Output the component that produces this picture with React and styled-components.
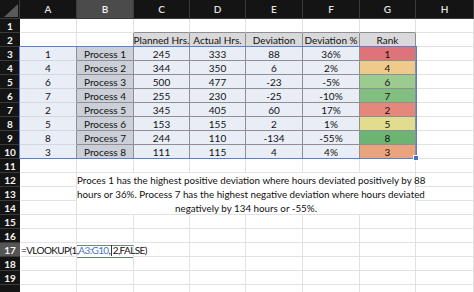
import React from 'react';
import styled, { createGlobalStyle } from 'styled-components';

const GlobalStyle = createGlobalStyle`
  html, body {
    margin: 0;
    padding: 0;
    background: #ffffff;
    overflow: hidden;
  }
  body {
    font-family: Lato, "Liberation Sans", sans-serif;
  }
`;

const COLS = ['A', 'B', 'C', 'D', 'E', 'F', 'G', 'H'];
const ROW_COUNT = 20;

const data = [
  { a: 1, name: 'Process 1', planned: 245, actual: 333, dev: 88, pct: '36%', rank: 1 },
  { a: 4, name: 'Process 2', planned: 344, actual: 350, dev: 6, pct: '2%', rank: 4 },
  { a: 6, name: 'Process 3', planned: 500, actual: 477, dev: -23, pct: '-5%', rank: 6 },
  { a: 7, name: 'Process 4', planned: 255, actual: 230, dev: -25, pct: '-10%', rank: 7 },
  { a: 2, name: 'Process 5', planned: 345, actual: 405, dev: 60, pct: '17%', rank: 2 },
  { a: 5, name: 'Process 6', planned: 153, actual: 155, dev: 2, pct: '1%', rank: 5 },
  { a: 8, name: 'Process 7', planned: 244, actual: 110, dev: -134, pct: '-55%', rank: 8 },
  { a: 3, name: 'Process 8', planned: 111, actual: 115, dev: 4, pct: '4%', rank: 3 },
];

const rankColors = {
  1: '#df737a',
  2: '#e5887b',
  3: '#e9a47e',
  4: '#eecb8b',
  5: '#e2dc8e',
  6: '#9bcb8e',
  7: '#80bf80',
  8: '#6db473',
};

const headings = ['Planned Hrs.', 'Actual Hrs.', 'Deviation', 'Deviation %', 'Rank'];

const note = [
  'Proces 1 has the highest positive deviation where hours deviated positively by 88',
  'hours or 36%. Process 7 has the highest negative deviation where hours deviated',
  'negatively by 134 hours or -55%.',
];

// framed table area: B3:B10 and C2:G10
const isFramed = (r, c) =>
  (c === 1 && r >= 3 && r <= 10) || (c >= 2 && c <= 6 && r >= 2 && r <= 10);

const DARK = '#8d8f94';
const GRID = '#e2e2e2';
const TINT_GRID = '#d3d9e3';

function edges(r, c) {
  const inTint = r >= 3 && r <= 10 && c <= 6;
  const light = inTint ? TINT_GRID : GRID;
  return {
    right: isFramed(r, c) || isFramed(r, c + 1) ? DARK : light,
    bottom: isFramed(r, c) || isFramed(r + 1, c) ? DARK : light,
  };
}

function cellContent(r, c) {
  if (r === 2 && c >= 2 && c <= 6) return { text: headings[c - 2], bg: '#d9d9db' };
  if (r >= 3 && r <= 10) {
    const d = data[r - 3];
    switch (c) {
      case 0: return { text: d.a, bg: '#e9edf5' };
      case 1: return { text: d.name, bg: '#cbcfd7' };
      case 2: return { text: d.planned, bg: '#e9edf5' };
      case 3: return { text: d.actual, bg: '#e9edf5' };
      case 4: return { text: d.dev, bg: '#e9edf5' };
      case 5: return { text: d.pct, bg: '#e9edf5' };
      case 6: return { text: d.rank, bg: rankColors[d.rank] };
      default: return { text: '', bg: 'transparent' };
    }
  }
  return { text: '', bg: 'transparent' };
}

export default function App() {
  const cells = [];

  cells.push(<Corner key="corner" />);
  COLS.forEach((col, c) => (
    cells.push(<ColHead key={col} $c={c + 2} $active={col === 'B'}>{col}</ColHead>)
  ));

  for (let r = 1; r <= ROW_COUNT; r++) {
    const gr = r + 1;
    // row 20 is only a sliver at the bottom edge, its number is out of view
    cells.push(<RowHead key={`h${r}`} $r={gr} $active={r === 17}>{r < ROW_COUNT ? r : ''}</RowHead>);
    for (let c = 0; c < COLS.length; c++) {
      const gc = c + 2;
      const { right, bottom } = edges(r, c);
      if (r >= 12 && r <= 14 && c >= 1 && c <= 6) {
        if (r === 12 && c === 1) {
          cells.push(
            <Merged key="merged">
              {note.map((line) => <NoteLine key={line}>{line}</NoteLine>)}
            </Merged>
          );
        }
        continue;
      }
      if (r === 17 && c === 0) {
        cells.push(
          <Cell key={`${r}-${c}`} $r={gr} $c={gc} $right={right} $bottom={bottom} $overflow>
            <Formula>
              =VLOOKUP(1,<Ref>A3:G10</Ref>,<Caret />2,FALSE)
            </Formula>
          </Cell>
        );
        continue;
      }
      if (r === 17 && c === 1) {
        cells.push(<EditCell key={`${r}-${c}`} $r={gr} $c={gc} $right={right} />);
        continue;
      }
      const { text, bg } = cellContent(r, c);
      cells.push(
        <Cell key={`${r}-${c}`} $r={gr} $c={gc} $right={right} $bottom={bottom} $bg={bg}>
          {text}
        </Cell>
      );
    }
  }

  return (
    <>
      <GlobalStyle />
      <Sheet>
        {cells}
        <Selection />
      </Sheet>
    </>
  );
}

const Sheet = styled.div`
  display: grid;
  grid-template-columns: 20px 57px 57px 56px 56px 57px 57px 56px 1fr;
  grid-template-rows: 19px;
  grid-auto-rows: 14px;
  width: 474px;
  height: 292px;
  overflow: hidden;
  font-size: 10px;
  color: #111111;
`;

const Corner = styled.div`
  grid-row: 1;
  grid-column: 1;
  position: relative;
  background: #141414;
  border-right: 1px solid #3a3a3a;
  border-bottom: 1px solid #3a3a3a;
  overflow: hidden;
  &::after {
    content: '';
    position: absolute;
    right: 1px;
    bottom: 1px;
    border-style: solid;
    border-width: 0 0 13px 14px;
    border-color: transparent transparent #5a5a5a transparent;
  }
`;

const ColHead = styled.div`
  grid-row: 1;
  grid-column: ${(p) => p.$c};
  display: flex;
  align-items: center;
  justify-content: center;
  background: ${(p) => (p.$active ? '#4b4b4b' : '#141414')};
  color: ${(p) => (p.$active ? '#f2f2f2' : '#e4e4e4')};
  border-right: 1px solid #3a3a3a;
  border-bottom: 1px solid #3a3a3a;
  font-size: 10px;
  font-weight: 600;
`;

const RowHead = styled.div`
  grid-row: ${(p) => p.$r};
  grid-column: 1;
  display: flex;
  align-items: center;
  justify-content: center;
  background: ${(p) => (p.$active ? '#555555' : '#141414')};
  color: #f4f4f4;
  border-bottom: 1px solid #3a3a3a;
  font-size: 10px;
  font-weight: 700;
`;

const Cell = styled.div`
  grid-row: ${(p) => p.$r};
  grid-column: ${(p) => p.$c};
  position: relative;
  z-index: ${(p) => (p.$overflow ? 2 : 0)};
  display: flex;
  align-items: center;
  justify-content: ${(p) => (p.$overflow ? 'flex-start' : 'center')};
  box-sizing: border-box;
  background: ${(p) => p.$bg || 'transparent'};
  border-right: 1px solid ${(p) => p.$right};
  border-bottom: 1px solid ${(p) => p.$bottom};
  white-space: nowrap;
  overflow: ${(p) => (p.$overflow ? 'visible' : 'hidden')};
`;

const EditCell = styled.div`
  grid-row: ${(p) => p.$r};
  grid-column: ${(p) => p.$c};
  box-sizing: border-box;
  margin: 2px 0 -1px;
  border-top: 1.5px solid #6b8a72;
  border-bottom: 1.5px solid #5f7f66;
  border-right: 1px solid ${(p) => p.$right};
`;

const Formula = styled.span`
  padding-left: 1px;
  font-size: 10px;
  letter-spacing: -0.62px;
  color: #111111;
`;

const Ref = styled.span`
  color: #4a74c4;
`;

const Caret = styled.span`
  display: inline-block;
  width: 0;
  height: 11px;
  margin: 0 1px 0 0.5px;
  border-left: 1px solid #333333;
  vertical-align: -2px;
`;

const Merged = styled.div`
  grid-row: 13 / span 3;
  grid-column: 3 / span 6;
  display: flex;
  flex-direction: column;
  box-sizing: border-box;
  border-right: 1px solid ${GRID};
  border-bottom: 1px solid ${GRID};
  background: #ffffff;
`;

const NoteLine = styled.div`
  height: 14px;
  line-height: 14px;
  text-align: center;
  white-space: nowrap;
  font-size: 9.8px;
  color: #111111;
`;

const Selection = styled.div`
  grid-column: 2 / 9;
  grid-row: 4 / 12;
  position: relative;
  z-index: 3;
  margin: -1px -1px 0 -1px;
  border: 1px solid #5b7fd0;
  pointer-events: none;
  &::after {
    content: '';
    position: absolute;
    right: -3px;
    bottom: -3px;
    width: 4px;
    height: 4px;
    background: #4a6fc8;
    border: 1px solid #ffffff;
  }
`;
